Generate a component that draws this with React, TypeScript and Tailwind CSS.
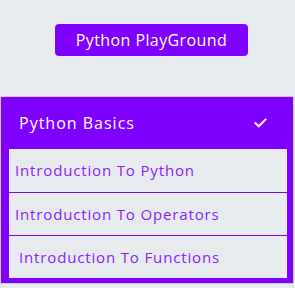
import React from "react";

export default function App() {
  const items = [
    { t: "Introduction To Python", pl: "pl-[6px]" },
    { t: "Introduction To Operators", pl: "pl-[6px]" },
    { t: "Introduction To Functions", pl: "pl-[10px]" },
  ];
  return (
    <div
      className="w-[295px] h-[288px] bg-[#e8ebed] overflow-hidden"
      style={{ fontFamily: '"Open Sans", "Noto Sans", sans-serif' }}
    >
      <div className="flex justify-center pt-[24px] pl-[8px]">
        <div className="w-[193px] h-[32px] rounded-[4px] bg-[#8000ff] flex items-center justify-center text-white text-[16px] font-medium tracking-[0.4px]">
          Python PlayGround
        </div>
      </div>
      <div className="mt-[40px] w-[294px] border border-[#c9cdd0] bg-[#8000ff] pl-[8px] pr-[6px] pb-[5px]">
        <div className="h-[52px] flex items-center justify-between pl-[10px] pr-[20px]">
          <span className="text-white text-[16px] font-medium tracking-[1px]">Python Basics</span>
          <svg width="13" height="10" viewBox="0 0 13 10" fill="none">
            <path d="M1.5 5.2 L4.8 8.3 L11.5 1.6" stroke="white" strokeWidth="2" strokeLinecap="square" />
          </svg>
        </div>
        <div className="bg-[#e8ebed] flex flex-col">
          {items.map((it, i) => (
            <div
              key={i}
              className={`h-[43px] flex items-center ${it.pl} text-[15px] text-[#8a1cff] tracking-[0.85px] ${i > 0 ? "border-t border-[#8000ff]" : ""}`}
            >
              {it.t}
            </div>
          ))}
        </div>
      </div>
    </div>
  );
}
